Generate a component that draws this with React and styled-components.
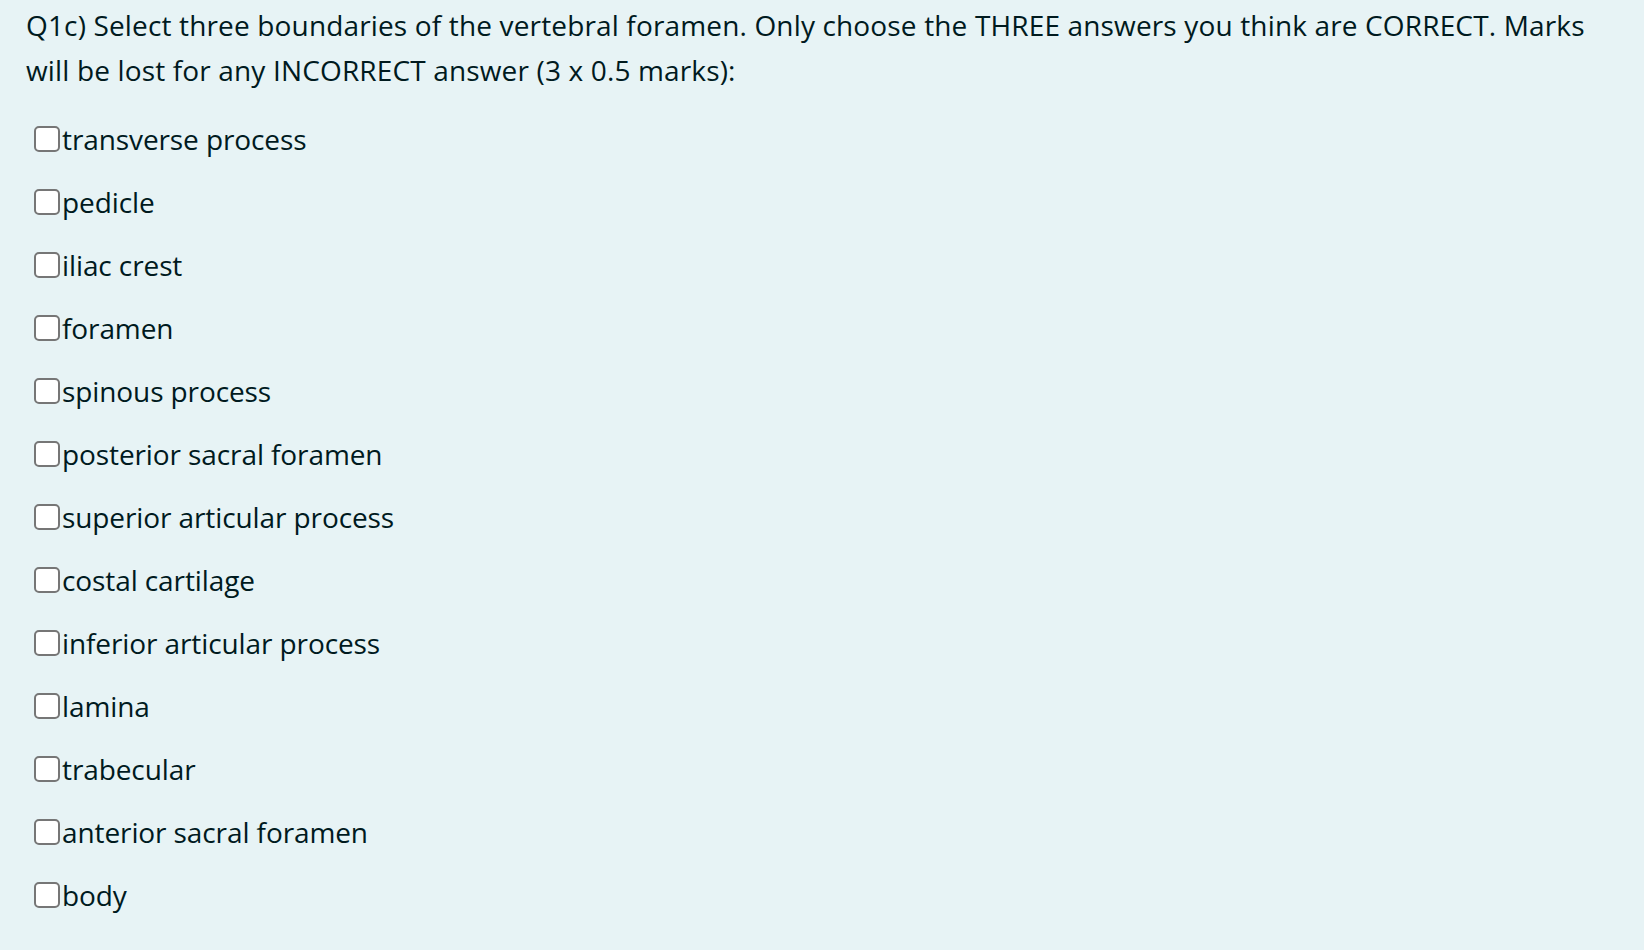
import React from "react";
import styled, { createGlobalStyle } from "styled-components";

const Global = createGlobalStyle`
  html, body { margin: 0; padding: 0; background: #e7f3f5; }
  body { font-family: "Open Sans", "Noto Sans", sans-serif; color: #001a1e; }
`;

const Page = styled.div`
  min-height: 950px;
  background: #e7f3f5;
  padding: 3px 30px 0 26px;
  box-sizing: border-box;
`;

const Question = styled.p`
  margin: 0;
  font-size: 28px;
  line-height: 45px;
  letter-spacing: 0.15px;
  max-width: 1590px;
`;

const List = styled.div`
  display: flex;
  flex-direction: column;
  padding-top: 14px;
  padding-left: 8px;
`;

const Row = styled.label`
  display: flex;
  align-items: center;
  height: 63px;
  font-size: 28px;
  letter-spacing: -0.1px;
  cursor: pointer;
`;

const Box = styled.input.attrs({ type: "checkbox" })`
  appearance: none;
  -webkit-appearance: none;
  margin: 0 2px 0 0;
  width: 26px;
  height: 26px;
  box-sizing: border-box;
  border: 2px solid #767676;
  border-radius: 5px;
  background: #fff;
  flex: none;
`;

const options = [
  "transverse process",
  "pedicle",
  "iliac crest",
  "foramen",
  "spinous process",
  "posterior sacral foramen",
  "superior articular process",
  "costal cartilage",
  "inferior articular process",
  "lamina",
  "trabecular",
  "anterior sacral foramen",
  "body",
];

export default function App() {
  return (
    <Page>
      <Global />
      <Question>
        Q1c) Select three boundaries of the vertebral foramen. Only choose the THREE answers you think are CORRECT. Marks will be lost for any INCORRECT answer (3 x 0.5 marks):
      </Question>
      <List>
        {options.map((o) => (
          <Row key={o}>
            <Box />
            <span>{o}</span>
          </Row>
        ))}
      </List>
    </Page>
  );
}
